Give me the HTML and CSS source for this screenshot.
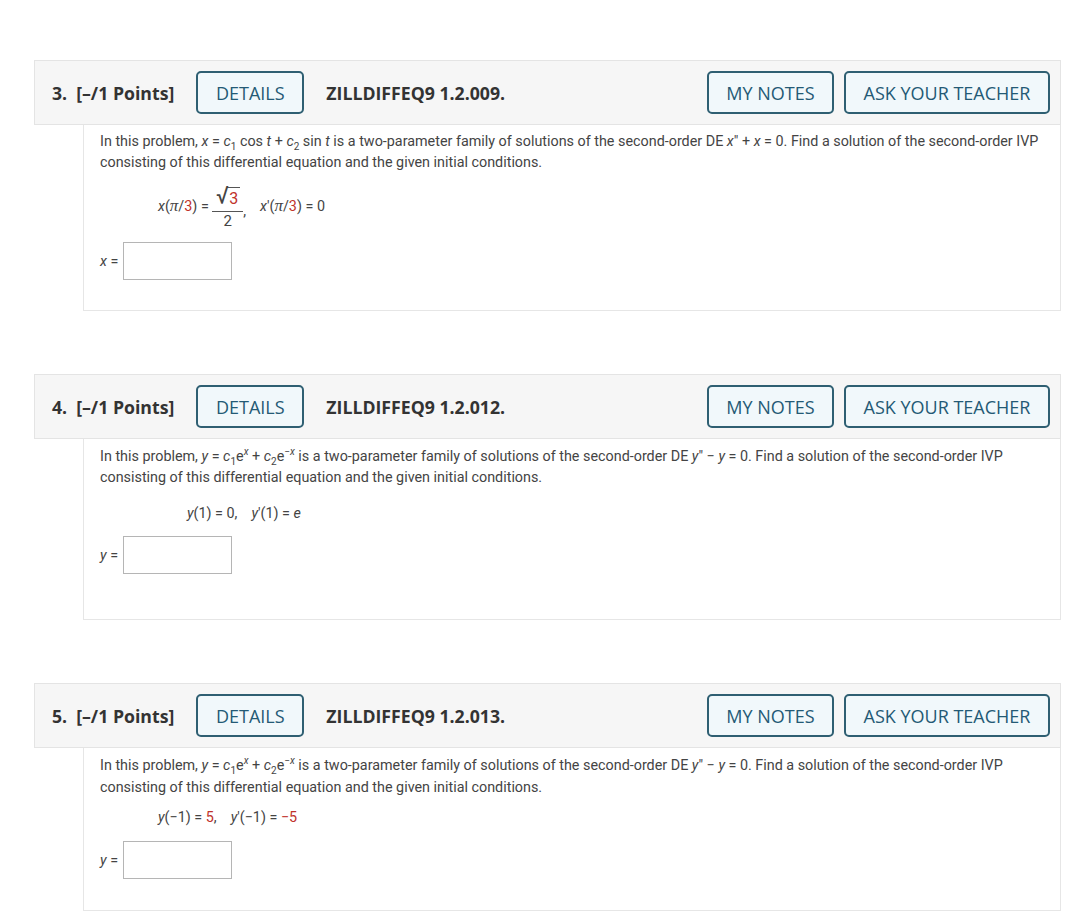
FILE: index.html
```html
<!DOCTYPE html>
<html>
<head>
<meta charset="utf-8">
<link rel="stylesheet" href="styles.css">
</head>
<body>
<div class="page">

  <section class="q q3">
    <div class="q-head">
      <span class="q-num">3.</span><span class="q-pts">[–/1 Points]</span>
      <button class="btn btn-details">DETAILS</button>
      <span class="q-code">ZILLDIFFEQ9 1.2.009.</span>
      <span class="spacer"></span>
      <button class="btn btn-notes">MY NOTES</button>
      <button class="btn btn-ask">ASK YOUR TEACHER</button>
    </div>
    <div class="q-body">
      <p class="prompt"><span class="ln">In this problem, <i>x</i> = <i>c</i><sub>1</sub> cos <i>t</i> + <i>c</i><sub>2</sub> sin <i>t</i> is a two-parameter family of solutions of the second-order DE <i>x</i>″ + <i>x</i> = 0. Find a solution of the second-order IVP</span><br><span class="ln">consisting of this differential equation and the given initial conditions.</span></p>
      <div class="formula f3">
        <span><i>x</i>(<span class="pi">π</span>/<span class="red">3</span>) =&nbsp;</span>
        <span class="frac"><span class="num"><span class="rad">√</span><span class="radicand red">3</span></span><span class="den">2</span></span>
        <span class="comma">,</span>
        <span class="gap"></span>
        <span><i>x</i>′(<span class="pi">π</span>/<span class="red">3</span>) = 0</span>
      </div>
      <div class="answer a3">
        <span class="lbl"><i>x</i> =</span><span class="box"></span>
      </div>
    </div>
  </section>

  <section class="q q4">
    <div class="q-head">
      <span class="q-num">4.</span><span class="q-pts">[–/1 Points]</span>
      <button class="btn btn-details">DETAILS</button>
      <span class="q-code">ZILLDIFFEQ9 1.2.012.</span>
      <span class="spacer"></span>
      <button class="btn btn-notes">MY NOTES</button>
      <button class="btn btn-ask">ASK YOUR TEACHER</button>
    </div>
    <div class="q-body">
      <p class="prompt"><span class="ln">In this problem, <i>y</i> = <i>c</i><sub>1</sub>e<sup><i>x</i></sup> + <i>c</i><sub>2</sub>e<sup>−<i>x</i></sup> is a two-parameter family of solutions of the second-order DE <i>y</i>″ − <i>y</i> = 0. Find a solution of the second-order IVP</span><br><span class="ln">consisting of this differential equation and the given initial conditions.</span></p>
      <div class="formula f4">
        <span><i>y</i>(1) = 0,</span><span class="gap"></span><span><i>y</i>′(1) = <i>e</i></span>
      </div>
      <div class="answer a4">
        <span class="lbl"><i>y</i> =</span><span class="box"></span>
      </div>
    </div>
  </section>

  <section class="q q5">
    <div class="q-head">
      <span class="q-num">5.</span><span class="q-pts">[–/1 Points]</span>
      <button class="btn btn-details">DETAILS</button>
      <span class="q-code">ZILLDIFFEQ9 1.2.013.</span>
      <span class="spacer"></span>
      <button class="btn btn-notes">MY NOTES</button>
      <button class="btn btn-ask">ASK YOUR TEACHER</button>
    </div>
    <div class="q-body">
      <p class="prompt"><span class="ln">In this problem, <i>y</i> = <i>c</i><sub>1</sub>e<sup><i>x</i></sup> + <i>c</i><sub>2</sub>e<sup>−<i>x</i></sup> is a two-parameter family of solutions of the second-order DE <i>y</i>″ − <i>y</i> = 0. Find a solution of the second-order IVP</span><br><span class="ln">consisting of this differential equation and the given initial conditions.</span></p>
      <div class="formula f5">
        <span><i>y</i>(−1) = <span class="red">5</span>,</span><span class="gap"></span><span><i>y</i>′(−1) = <span class="red">−5</span></span>
      </div>
      <div class="answer a5">
        <span class="lbl"><i>y</i> =</span><span class="box"></span>
      </div>
    </div>
  </section>

</div>
</body>
</html>
```

FILE: styles.css
```css
html, body {
  margin: 0;
  padding: 0;
  background: #ffffff;
}

.page {
  padding: 60px 19px 0 34px;
  width: 1027px;
  display: flex;
  flex-direction: column;
  gap: 63px;
}

.q-head {
  height: 63px;
  display: flex;
  align-items: center;
  background: #f6f6f6;
  border: 1px solid #e4e4e4;
  padding: 0 10px 0 17px;
  font-family: "Open Sans", "Liberation Sans", sans-serif;
  color: #333333;
  font-size: 17.7px;
}

.q-num {
  font-weight: 700;
  margin-right: 9px;
}

.q-pts {
  font-weight: 700;
}

.q-code {
  font-weight: 700;
  margin-left: 22px;
}

.spacer {
  flex: 1;
}

.btn {
  height: 43px;
  box-sizing: border-box;
  border: 2px solid #2f5f72;
  border-radius: 5px;
  background: #f1f8fb;
  color: #245a75;
  font-family: "Open Sans", "Liberation Sans", sans-serif;
  font-size: 18px;
  font-weight: 500;
  padding: 0;
  cursor: pointer;
}

.btn-details {
  margin-left: 22px;
  width: 108px;
}

.btn-notes {
  width: 127px;
}

.btn-ask {
  width: 206px;
  margin-left: 10px;
}

.q-body {
  margin-left: 49px;
  background: #ffffff;
  border: 1px solid #e6e6e6;
  border-top: none;
  padding: 6px 16px 30px 16px;
  font-family: Roboto, "Liberation Sans", sans-serif;
  font-size: 14.35px;
  color: #444444;
}

.q4 .q-body {
  padding-top: 7px;
  padding-bottom: 45px;
}

.q5 .q-body {
  padding-top: 7px;
  padding-bottom: 31px;
}

.prompt {
  margin: 0;
  line-height: 21px;
}

.q5 .prompt {
  line-height: 22px;
}

.ln {
  white-space: nowrap;
}

sub, sup {
  font-size: 10px;
  line-height: 0;
}

sub {
  vertical-align: -4px;
}

sup {
  vertical-align: 6px;
}

.red {
  color: #c0322b;
}

.pi {
  font-family: "Liberation Serif", "DejaVu Serif", serif;
  font-style: italic;
  font-size: 17px;
}

.formula {
  display: flex;
  align-items: center;
  white-space: nowrap;
  line-height: 21px;
}

.formula .gap {
  width: 14px;
}

.f3 {
  margin: 10px 0 0 58px;
  height: 46px;
}

.f4 {
  margin: 15px 0 0 87px;
}

.f5 {
  margin: 8px 0 0 58px;
}

.frac {
  display: inline-flex;
  flex-direction: column;
  align-items: center;
  align-self: flex-start;
}

.frac .num {
  display: flex;
  align-items: flex-end;
  height: 29px;
  box-sizing: border-box;
  border-bottom: 1px solid #555555;
  padding: 0 3px 3px 3px;
}

.rad {
  font-size: 25px;
  line-height: 24px;
  transform: scaleX(0.85);
}

.radicand {
  border-top: 1px solid #555555;
  line-height: 19px;
  padding: 1px 2px 0 2px;
  margin-left: -3px;
  font-size: 16px;
}

.frac .den {
  line-height: 16px;
  padding-top: 1px;
  font-size: 15px;
}

.comma {
  margin-top: 10px;
}

.answer {
  display: flex;
  align-items: center;
}

.a3 {
  margin-top: 13px;
}

.a4 {
  margin-top: 12px;
}

.a5 {
  margin-top: 13px;
}

.lbl {
  width: 23px;
  white-space: nowrap;
}

.box {
  display: block;
  width: 109px;
  height: 38px;
  box-sizing: border-box;
  border: 1px solid #b5b5b5;
  background: #ffffff;
}
```
